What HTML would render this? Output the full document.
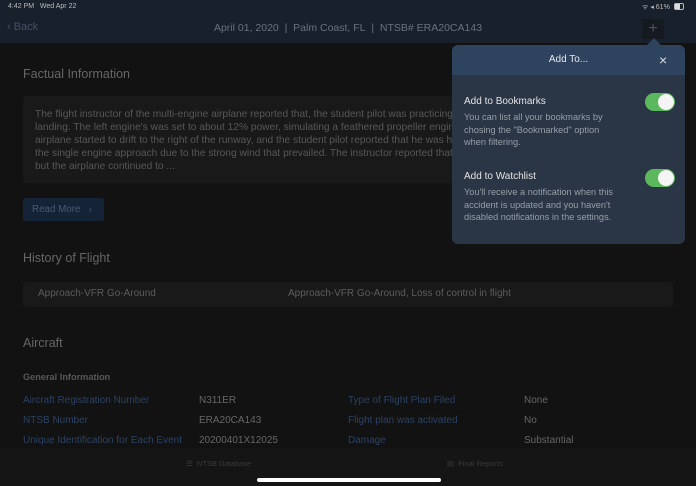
<!DOCTYPE html>
<html><head><meta charset="utf-8"><style>
*{margin:0;padding:0;box-sizing:border-box}
body{width:696px;height:486px;overflow:hidden;background:#121212;font-family:"Liberation Sans",sans-serif;position:relative;color:#777}
.abs{position:absolute}
.nav{left:0;top:0;width:696px;height:43px;background:#18202b}
.card{background:#191919;border-radius:3px}
.blue{color:#2b4263}
.val{color:#666}
</style></head><body>
<div class="abs nav"></div>
<div class="abs" style="left:8px;top:3px;font-size:7px;color:#bbb">4:42 PM&nbsp;&nbsp; Wed Apr 22</div>
<div class="abs" style="left:642px;top:3px;font-size:7px;color:#bbb">ᯤ ◂ 61%</div>
<div class="abs" style="left:674px;top:3px;width:10px;height:7px;border:1px solid #bbb;border-radius:2px"><div style="width:5px;height:5px;background:#ddd"></div></div>
<div class="abs" style="left:7px;top:21px;font-size:11px;color:#445064">&#8249; Back</div>
<div class="abs" style="left:0;width:696px;text-align:center;top:22px;font-size:10.5px;color:#68717e">April 01, 2020&nbsp; | &nbsp;Palm Coast, FL&nbsp; | &nbsp;NTSB# ERA20CA143</div>
<div class="abs" style="left:642px;top:19px;width:22px;height:20px;background:#151a21;color:#445064;font-size:16px;text-align:center;line-height:20px">+</div>
<div class="abs" style="left:23px;top:67px;font-size:12.5px;color:#666">Factual Information</div>
<div class="abs card" style="left:23px;top:96px;width:650px;height:87px"></div>
<div class="abs" style="left:35px;top:108px;width:600px;font-size:10.2px;line-height:13px;color:#575757;white-space:nowrap;overflow:hidden">The flight instructor of the multi-engine airplane reported that, the student pilot was practicing a single<br>landing. The left engine's was set to about 12% power, simulating a feathered propeller engine, and the<br>airplane started to drift to the right of the runway, and the student pilot reported that he was having<br>the single engine approach due to the strong wind that prevailed. The instructor reported that he took<br>but the airplane continued to ...</div>
<div class="abs" style="left:23px;top:198px;width:81px;height:23px;background:#15243627;background:#152336;border-radius:2px;font-size:9.8px;color:#4b5970;padding:6px 0 0 9px">Read More &nbsp;&nbsp;&#8250;</div>
<div class="abs" style="left:23px;top:251px;font-size:12.5px;color:#666">History of Flight</div>
<div class="abs card" style="left:23px;top:282px;width:650px;height:25px"></div>
<div class="abs" style="left:38px;top:288px;font-size:10px;color:#5c5c5c">Approach-VFR Go-Around</div>
<div class="abs" style="left:288px;top:288px;font-size:10px;color:#5c5c5c">Approach-VFR Go-Around, Loss of control in flight</div>
<div class="abs" style="left:23px;top:336px;font-size:12.5px;color:#666">Aircraft</div>
<div class="abs" style="left:23px;top:372px;font-size:9.2px;font-weight:bold;color:#585858">General Information</div>
<div class="abs" style="top:391px;left:0;width:696px;font-size:10px;line-height:20px">
<div class="abs blue" style="left:23px">Aircraft Registration Number<br>NTSB Number<br>Unique Identification for Each Event</div>
<div class="abs val" style="left:199px">N311ER<br>ERA20CA143<br>20200401X12025</div>
<div class="abs blue" style="left:348px">Type of Flight Plan Filed<br>Flight plan was activated<br>Damage</div>
<div class="abs val" style="left:524px">None<br>No<br>Substantial</div>
</div>
<div class="abs" style="left:0;top:448px;width:696px;height:38px;background:#151515"></div>
<div class="abs" style="left:186px;top:459px;font-size:7.5px;color:#3a3a3a">☰&nbsp; NTSB Database</div>
<div class="abs" style="left:447px;top:459px;font-size:7.5px;color:#3a3a3a">▤&nbsp; Final Reports</div>
<div class="abs" style="left:257px;top:478px;width:184px;height:4px;background:#fff;border-radius:2px"></div>
<div class="abs" style="left:647px;top:38px;width:0;height:0;border-left:7px solid transparent;border-right:7px solid transparent;border-bottom:7px solid #2d435e"></div>
<div class="abs" style="left:452px;top:45px;width:233px;height:199px;background:#2a3545;border-radius:6px;overflow:hidden">
<div style="height:30px;background:#2d435e;text-align:center;color:#e8e8e8;font-size:10px;line-height:30px">Add To...</div>
<div class="abs" style="left:207px;top:7px;color:#ddd;font-size:14px">×</div>
<div class="abs" style="left:12px;top:51px;font-size:10px;color:#e4e4e4">Add to Bookmarks</div>
<div class="abs" style="left:12px;top:66px;font-size:9.2px;line-height:12.5px;color:#979ea7">You can list all your bookmarks by<br>chosing the "Bookmarked" option<br>when filtering.</div>
<div class="abs" style="left:12px;top:126px;font-size:10px;color:#e4e4e4">Add to Watchlist</div>
<div class="abs" style="left:12px;top:141px;font-size:9.2px;line-height:12.5px;color:#979ea7">You'll receive a notification when this<br>accident is updated and you haven't<br>disabled notifications in the settings.</div>
<div class="abs" style="left:193px;top:48px;width:30px;height:18px;border-radius:9px;background:#5cb85c"><div style="position:absolute;right:1px;top:1px;width:16px;height:16px;border-radius:8px;background:#f4f4f4"></div></div>
<div class="abs" style="left:193px;top:124px;width:30px;height:18px;border-radius:9px;background:#5cb85c"><div style="position:absolute;right:1px;top:1px;width:16px;height:16px;border-radius:8px;background:#f4f4f4"></div></div>
</div>
</body></html>
